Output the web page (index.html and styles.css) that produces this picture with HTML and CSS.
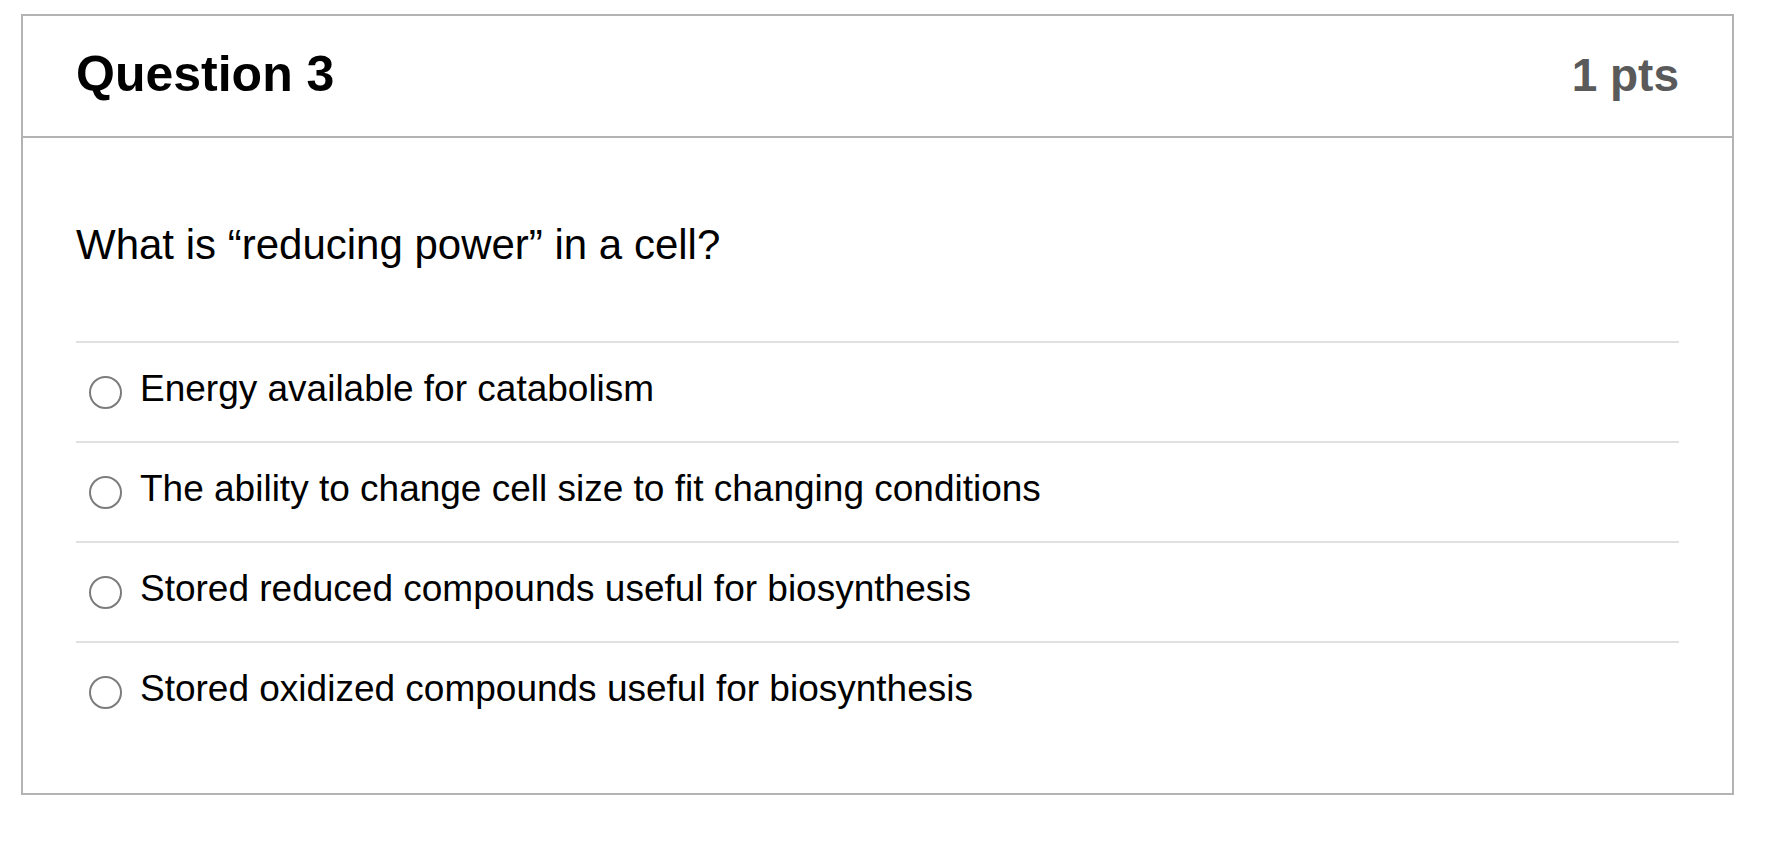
FILE: index.html
```html
<!DOCTYPE html>
<html lang="en">
<head>
<meta charset="utf-8">
<title>Question 3</title>
<link rel="stylesheet" href="styles.css">
</head>
<body>
<div class="quiz-card">
  <div class="quiz-header">
    <h2 class="quiz-title">Question 3</h2>
    <span class="quiz-points">1 pts</span>
  </div>
  <div class="quiz-body">
    <p class="quiz-question">What is “reducing power” in a cell?</p>
    <ul class="answers">
      <li class="answer"><span class="radio"></span><span class="answer-text">Energy available for catabolism</span></li>
      <li class="answer"><span class="radio"></span><span class="answer-text">The ability to change cell size to fit changing conditions</span></li>
      <li class="answer"><span class="radio"></span><span class="answer-text">Stored reduced compounds useful for biosynthesis</span></li>
      <li class="answer"><span class="radio"></span><span class="answer-text">Stored oxidized compounds useful for biosynthesis</span></li>
    </ul>
  </div>
</div>
</body>
</html>
```
FILE: styles.css
```css
html, body {
  margin: 0;
  padding: 0;
  background: #ffffff;
}

body {
  font-family: "Liberation Sans", Arial, sans-serif;
  color: #000000;
  padding: 14px 0 0 21px;
}

.quiz-card {
  box-sizing: border-box;
  width: 1713px;
  border: 2px solid #b3b3b3;
  background: #ffffff;
}

.quiz-header {
  display: flex;
  justify-content: space-between;
  align-items: baseline;
  padding: 30px 53px 33px 53px;
  border-bottom: 2px solid #b3b3b3;
}

.quiz-title {
  margin: 0;
  font-size: 50px;
  line-height: 56px;
  font-weight: bold;
  color: #000000;
}

.quiz-points {
  font-size: 46px;
  line-height: 56px;
  font-weight: bold;
  color: #5a5a5a;
}

.quiz-body {
  padding: 83px 53px 52px 53px;
}

.quiz-question {
  margin: 0 0 72px 0;
  font-size: 42px;
  line-height: 48px;
}

.answers {
  list-style: none;
  margin: 0;
  padding: 0;
}

.answer {
  display: flex;
  align-items: center;
  border-top: 2px solid #e0e0e0;
  padding: 25px 0 31px 13px;
}

.radio {
  box-sizing: border-box;
  flex: none;
  width: 33px;
  height: 33px;
  margin-top: 6px;
  margin-right: 18px;
  border: 2px solid #7c7c7c;
  border-radius: 50%;
  background: #ffffff;
}

.answer-text {
  font-size: 37px;
  line-height: 42px;
}
```
